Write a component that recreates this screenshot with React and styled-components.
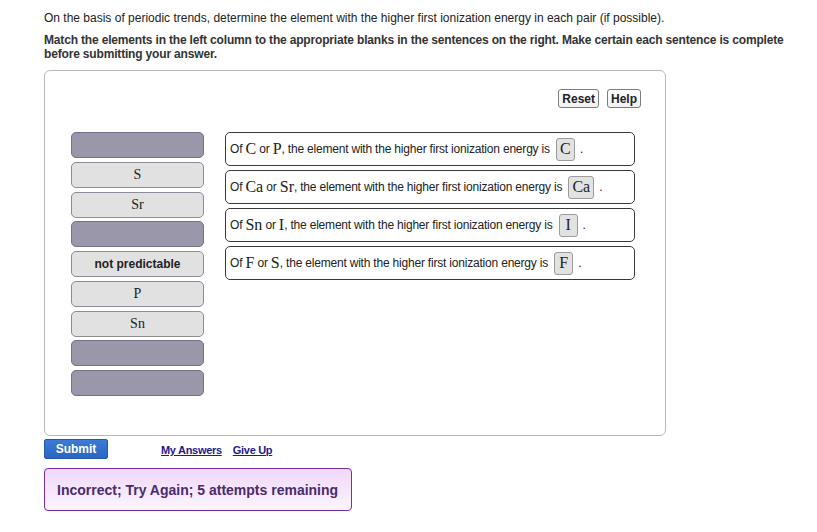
import React from "react";
import styled, { createGlobalStyle } from "styled-components";

const GlobalStyle = createGlobalStyle`
  body {
    margin: 0;
    background: #fff;
    font-family: "Liberation Sans", Arial, sans-serif;
    color: #222;
  }
`;

const Page = styled.div`
  padding: 11px 44px 0 44px;
  width: 760px;
`;

const Intro = styled.p`
  margin: 0;
  font-size: 12px;
  line-height: 14px;
`;

const Instructions = styled.p`
  margin: 9px 0 0 0;
  font-size: 12px;
  line-height: 13.5px;
  font-weight: bold;
  letter-spacing: -0.17px;
  color: #333;
`;

const Panel = styled.div`
  margin-top: 9px;
  width: 620px;
  height: 364px;
  border: 1px solid #b8b8b8;
  border-radius: 6px;
`;

const Toolbar = styled.div`
  display: flex;
  justify-content: flex-end;
  gap: 8px;
  margin: 18px 24px 0 0;
`;

const ToolButton = styled.button`
  height: 19px;
  padding: 0 3px;
  font-family: "Liberation Sans", Arial, sans-serif;
  font-size: 12px;
  font-weight: bold;
  color: #222;
  background: linear-gradient(#ffffff, #f1f1f1);
  border: 1px solid #7d7d7d;
  border-radius: 3px;
`;

const Board = styled.div`
  display: flex;
  gap: 21px;
  margin: 24px 0 0 26px;
  align-items: flex-start;
`;

const TileColumn = styled.div`
  display: flex;
  flex-direction: column;
  gap: 3.75px;
`;

const Tile = styled.div`
  box-sizing: border-box;
  width: 133px;
  height: 26px;
  border-radius: 5px;
  border: 1px solid ${(p) => (p.$empty ? "#74728a" : "#8c8b99")};
  background: ${(p) => (p.$empty ? "#9a97ab" : "#e1e1e1")};
  display: flex;
  align-items: center;
  justify-content: center;
  font-family: ${(p) =>
    p.$word ? '"Liberation Sans", Arial, sans-serif' : '"Liberation Serif", "Times New Roman", serif'};
  font-size: ${(p) => (p.$word ? "12px" : "14px")};
  font-weight: ${(p) => (p.$word ? "bold" : "normal")};
  color: #222;
`;

const SentenceColumn = styled.div`
  display: flex;
  flex-direction: column;
  gap: 4px;
`;

const Sentence = styled.div`
  box-sizing: border-box;
  width: 410px;
  height: 34px;
  border: 1px solid #3a3a3a;
  border-radius: 5px;
  display: flex;
  align-items: center;
  padding-left: 4px;
  font-size: 12px;
  letter-spacing: -0.2px;
  color: #222;
  white-space: pre;
`;

const El = styled.span`
  font-family: "Liberation Serif", "Times New Roman", serif;
  font-size: 16px;
  letter-spacing: 0;
`;

const Blank = styled.span`
  box-sizing: border-box;
  height: 23px;
  min-width: 19px;
  padding: 0 3px;
  margin: 0 5px 0 3px;
  display: inline-flex;
  align-items: center;
  justify-content: center;
  background: #e2e2e2;
  border: 1px solid #9c9c9c;
  border-radius: 3px;
  font-family: "Liberation Serif", "Times New Roman", serif;
  font-size: 16px;
  letter-spacing: 0;
  color: #222;
`;

const Actions = styled.div`
  display: flex;
  align-items: center;
  margin-top: 3px;
`;

const SubmitButton = styled.button`
  width: 64px;
  height: 20px;
  padding: 0;
  background: linear-gradient(#3a7bd6, #2a66c2);
  border: 1px solid #2358a8;
  border-radius: 2px;
  color: #fff;
  font-family: "Liberation Sans", Arial, sans-serif;
  font-size: 12px;
  font-weight: bold;
`;

const LinkRow = styled.div`
  display: flex;
  gap: 11px;
  margin-left: 53px;
  padding-top: 2px;
`;

const Link = styled.a`
  font-size: 11px;
  font-weight: bold;
  letter-spacing: -0.3px;
  color: #1c1c8c;
  text-decoration: underline;
`;

const Feedback = styled.div`
  box-sizing: border-box;
  margin-top: 9px;
  width: 308px;
  height: 43px;
  border: 1px solid #7d2e9e;
  border-radius: 4px;
  background: linear-gradient(#efd7f9, #fcf5fe);
  display: flex;
  align-items: center;
  padding-left: 12px;
  font-size: 14px;
  font-weight: bold;
  color: #4a2b6c;
`;

const tiles = [
  { empty: true },
  { label: "S" },
  { label: "Sr" },
  { empty: true },
  { label: "not predictable", word: true },
  { label: "P" },
  { label: "Sn" },
  { empty: true },
  { empty: true },
];

const sentences = [
  { a: "C", b: "P", answer: "C" },
  { a: "Ca", b: "Sr", answer: "Ca" },
  { a: "Sn", b: "I", answer: "I" },
  { a: "F", b: "S", answer: "F" },
];

const App = () => {
  return (
    <Page>
      <GlobalStyle />
      <Intro>
        On the basis of periodic trends, determine the element with the higher first ionization
        energy in each pair (if possible).
      </Intro>
      <Instructions>
        Match the elements in the left column to the appropriate blanks in the sentences on the
        right. Make certain each sentence is complete before submitting your answer.
      </Instructions>
      <Panel>
        <Toolbar>
          <ToolButton>Reset</ToolButton>
          <ToolButton>Help</ToolButton>
        </Toolbar>
        <Board>
          <TileColumn>
            {tiles.map((t, i) => (
              <Tile key={i} $empty={t.empty} $word={t.word}>
                {t.label}
              </Tile>
            ))}
          </TileColumn>
          <SentenceColumn>
            {sentences.map((s) => (
              <Sentence key={s.a}>
                {"Of "}
                <El>{s.a}</El>
                {" or "}
                <El>{s.b}</El>
                {", the element with the higher first ionization energy is "}
                <Blank>{s.answer}</Blank>
                {"."}
              </Sentence>
            ))}
          </SentenceColumn>
        </Board>
      </Panel>
      <Actions>
        <SubmitButton>Submit</SubmitButton>
        <LinkRow>
          <Link>My Answers</Link>
          <Link>Give Up</Link>
        </LinkRow>
      </Actions>
      <Feedback>Incorrect; Try Again; 5 attempts remaining</Feedback>
    </Page>
  );
};

export default App;
